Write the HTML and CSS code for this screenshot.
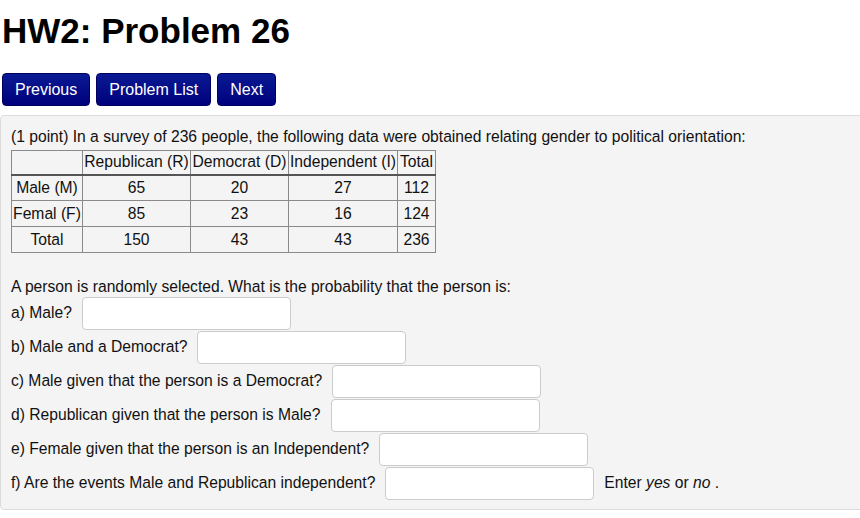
FILE: index.html
```html
<!DOCTYPE html>
<html>
<head>
<meta charset="utf-8">
<link rel="stylesheet" href="styles.css">
</head>
<body>
<h1 class="title">HW2: Problem 26</h1>
<div class="nav">
  <a class="btn">Previous</a>
  <a class="btn">Problem List</a>
  <a class="btn">Next</a>
</div>
<div class="problem">
  <div class="intro">(1 point) In a survey of 236 people, the following data were obtained relating gender to political orientation:</div>
  <table class="data">
    <colgroup>
      <col class="c1"><col class="c2"><col class="c3"><col class="c4"><col class="c5">
    </colgroup>
    <tr class="head"><td></td><td>Republican (R)</td><td>Democrat (D)</td><td>Independent (I)</td><td>Total</td></tr>
    <tr class="r1"><td>Male (M)</td><td>65</td><td>20</td><td>27</td><td>112</td></tr>
    <tr class="r2"><td>Femal (F)</td><td>85</td><td>23</td><td>16</td><td>124</td></tr>
    <tr class="r2"><td>Total</td><td>150</td><td>43</td><td>43</td><td>236</td></tr>
  </table>
  <div class="prompt">A person is randomly selected. What is the probability that the person is:</div>
  <div class="q"><span>a) Male?</span><input class="ans" type="text"></div>
  <div class="q"><span>b) Male and a Democrat?</span><input class="ans" type="text"></div>
  <div class="q"><span>c) Male given that the person is a Democrat?</span><input class="ans" type="text"></div>
  <div class="q"><span>d) Republican given that the person is Male?</span><input class="ans" type="text"></div>
  <div class="q"><span>e) Female given that the person is an Independent?</span><input class="ans" type="text"></div>
  <div class="q"><span>f) Are the events Male and Republican independent?</span><input class="ans" type="text"><span class="hint">Enter <i>yes</i> or <i>no</i> .</span></div>
</div>
</body>
</html>
```

FILE: styles.css
```css
html, body {
  margin: 0;
  padding: 0;
  overflow: hidden;
  background: #ffffff;
  font-family: "Liberation Sans", Arial, sans-serif;
  color: #000;
}

.title {
  margin: 11px 0 0 2px;
  font-size: 35px;
  font-weight: bold;
  line-height: 40px;
  color: #000;
}

.nav {
  display: flex;
  gap: 6px;
  margin: 22px 0 0 2px;
}

.btn {
  display: flex;
  align-items: center;
  height: 31px;
  padding: 0 12px;
  border: 1px solid #00005e;
  border-radius: 4px;
  background: linear-gradient(#0a1a94, #00007c);
  color: #fff;
  font-size: 16px;
  text-decoration: none;
}

.problem {
  margin: 9px -6px 0 0;
  padding: 12px 10px 9px 10px;
  border: 1px solid #dcdcdc;
  border-radius: 4px;
  background: #f4f4f4;
  font-size: 15.65px;
  line-height: 18px;
  color: #111;
}

.intro {
  margin: 0;
}

.data {
  margin-top: 4px;
  border-collapse: collapse;
  table-layout: fixed;
  width: 424px;
}

.c1 { width: 71px; }
.c2 { width: 108px; }
.c3 { width: 98px; }
.c4 { width: 109px; }
.c5 { width: 38px; }

.data td {
  border: 1px solid #8a8a8a;
  padding: 3px 0;
  text-align: center;
  white-space: nowrap;
}

.data .head td {
  padding: 2px 0 3px;
  border-bottom: 2px solid #555;
}

.data .r2 td {
  padding: 4px 0 3px;
}

.prompt {
  margin-top: 25px;
}

.q {
  display: flex;
  align-items: center;
  gap: 10px;
  height: 34px;
}

.ans {
  box-sizing: border-box;
  width: 209px;
  height: 33px;
  margin: 0;
  padding: 4px 6px;
  border: 1px solid #cccccc;
  border-radius: 4px;
  background: #fff;
  font-family: inherit;
  font-size: 15px;
}

.hint {
  margin-left: 0;
}
```
